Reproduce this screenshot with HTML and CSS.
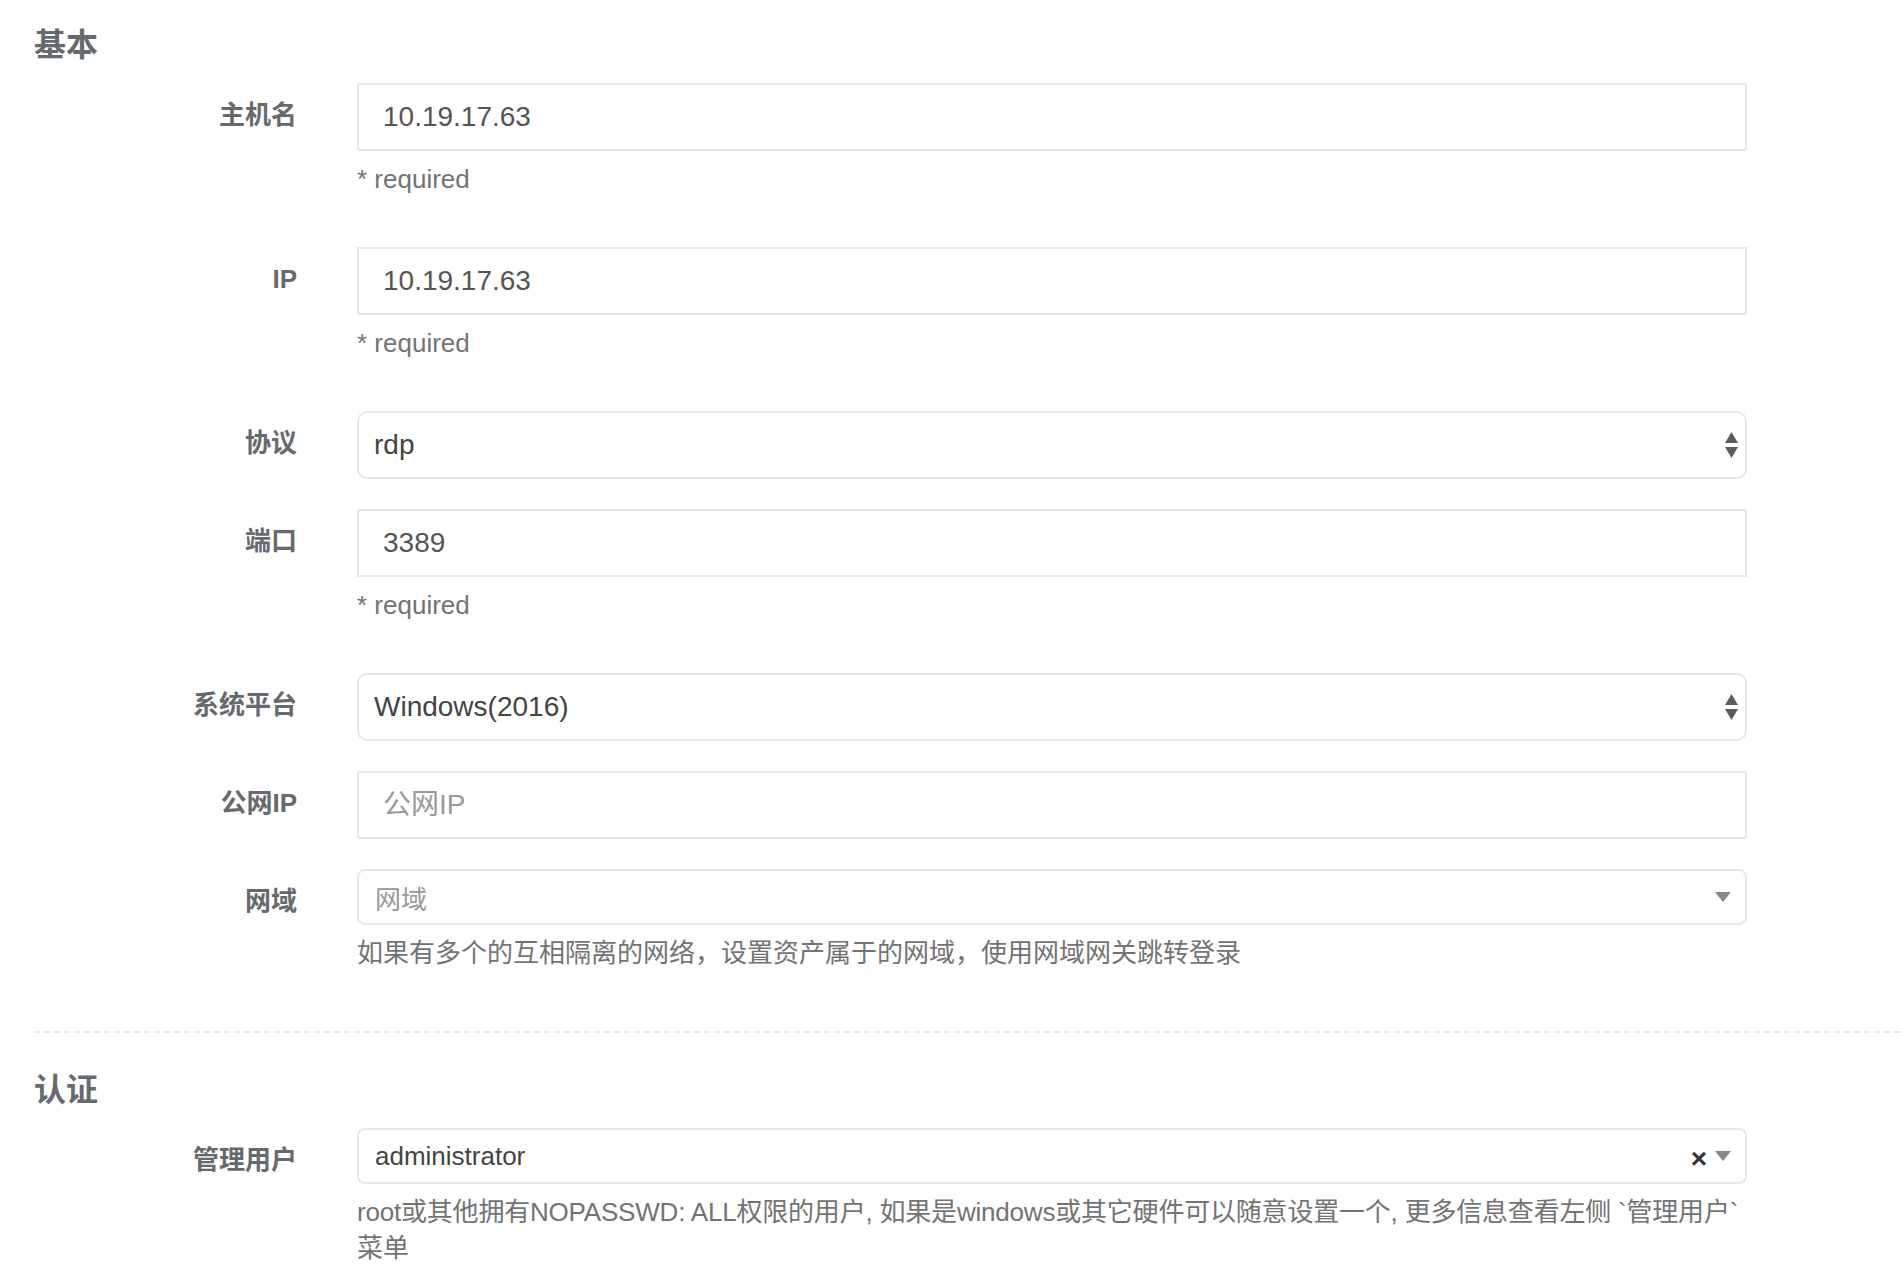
FILE: index.html
```
<!DOCTYPE html>
<html lang="zh-CN">
    <head>
        <meta charset="UTF-8">
        <title>资产</title>
        <link rel="stylesheet" href="styles.css">
    </head>
    <body>
        <form class="page">
            <h3>基本</h3>
            <div class="form-group">
                <label>主机名</label>
                <div class="control">
                    <input class="form-control" type="text" value="10.19.17.63">
                    <div class="help-block">* required</div>
                </div>
            </div>
            <div class="form-group">
                <label>IP</label>
                <div class="control">
                    <input class="form-control" type="text" value="10.19.17.63">
                    <div class="help-block">* required</div>
                </div>
            </div>
            <div class="form-group">
                <label>协议</label>
                <div class="control">
                    <div class="native-select">
                        <span>rdp</span>
                        <svg width="13" height="26" viewBox="0 0 13 26"><path d="M6.5 0 L13 11 L0 11 Z M0 15 L13 15 L6.5 26 Z" fill="#5c5c5c"/></svg>
                    </div>
                </div>
            </div>
            <div class="form-group">
                <label>端口</label>
                <div class="control">
                    <input class="form-control" type="text" value="3389">
                    <div class="help-block">* required</div>
                </div>
            </div>
            <div class="form-group">
                <label>系统平台</label>
                <div class="control">
                    <div class="native-select">
                        <span>Windows(2016)</span>
                        <svg width="13" height="26" viewBox="0 0 13 26"><path d="M6.5 0 L13 11 L0 11 Z M0 15 L13 15 L6.5 26 Z" fill="#5c5c5c"/></svg>
                    </div>
                </div>
            </div>
            <div class="form-group">
                <label>公网IP</label>
                <div class="control">
                    <input class="form-control" type="text" placeholder="公网IP">
                </div>
            </div>
            <div class="form-group">
                <label>网域</label>
                <div class="control">
                    <div class="select2">
                        <span class="placeholder">网域</span>
                        <span class="arrow"></span>
                    </div>
                    <div class="help-block">如果有多个的互相隔离的网络，设置资产属于的网域，使用网域网关跳转登录</div>
                </div>
            </div>

            <div class="hr-line-dashed"></div>

            <h3>认证</h3>
            <div class="form-group">
                <label>管理用户</label>
                <div class="control">
                    <div class="select2">
                        <span class="value">administrator</span>
                        <span class="clear">×</span>
                        <span class="arrow"></span>
                    </div>
                    <div class="help-block"><span class="nowrap">root或其他拥有NOPASSWD: ALL权限的用户, 如果是windows或其它硬件可以随意设置一个, 更多信息查看左侧 `管理用户`</span><br>菜单</div>
                </div>
            </div>
        </form>
    </body>
</html>
```

FILE: styles.css
```
body {
    margin: 0;
    font-family: "Liberation Sans", "Noto Sans CJK SC", sans-serif;
    font-size: 26px;
    color: #676a6c;
    background: #fff;
    overflow: hidden;
}
.page {
    display: flex;
    flex-direction: column;
    padding: 28px 0 0 34px;
    margin: 0;
}
h3 {
    margin: 0 0 20px;
    font-size: 32px;
    line-height: 35px;
    font-weight: bold;
    color: #676a6c;
}
.form-group {
    display: flex;
    margin-bottom: 30px;
}
.form-group label {
    width: 263px;
    margin-right: 60px;
    padding-top: 14px;
    line-height: 37px;
    text-align: right;
    font-weight: bold;
    color: #676a6c;
}
.control {
    width: 1390px;
}
.form-control {
    display: block;
    box-sizing: border-box;
    width: 100%;
    height: 68px;
    margin: 0;
    padding: 0 24px;
    border: 2px solid #e5e6e7;
    border-radius: 2px;
    font-family: inherit;
    font-size: 28px;
    color: #555;
    outline: none;
}
.form-control::placeholder {
    color: #999;
}
.help-block {
    margin: 10px 0 20px;
    line-height: 36px;
    color: #737373;
}
.nowrap {
    white-space: nowrap;
    letter-spacing: -0.2px;
}
.native-select {
    box-sizing: border-box;
    height: 68px;
    display: flex;
    align-items: center;
    justify-content: space-between;
    padding: 0 7px 0 15px;
    border: 2px solid #e5e6e7;
    border-radius: 10px;
    font-size: 28px;
    color: #444;
}
.select2 {
    box-sizing: border-box;
    height: 56px;
    display: flex;
    align-items: center;
    padding: 0 14px 0 16px;
    border: 2px solid #e5e6e7;
    border-radius: 8px;
    font-size: 26px;
}
.select2 .placeholder {
    flex: 1;
    color: #999;
}
.select2 .value {
    flex: 1;
    color: #444;
}
.select2 .clear {
    font-weight: bold;
    font-size: 28px;
    color: #333;
    margin-right: 8px;
    margin-top: 6px;
}
.select2 .arrow {
    width: 0;
    height: 0;
    border-style: solid;
    border-width: 10px 8px 0 8px;
    border-color: #888 transparent transparent transparent;
}
.hr-line-dashed {
    height: 2px;
    margin: 10px 0 40px;
    background: repeating-linear-gradient(to right, #e7eaec 0 6px, transparent 6px 10px);
}
```
